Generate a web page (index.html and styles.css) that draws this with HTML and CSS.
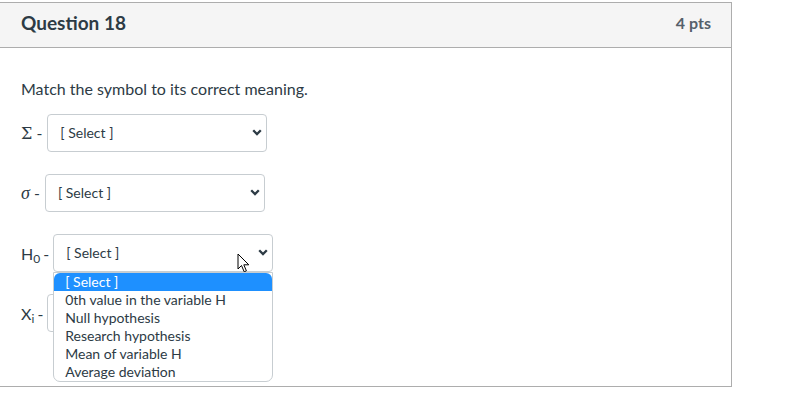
FILE: index.html
```html
<!DOCTYPE html>
<html>
<head>
<meta charset="utf-8">
<link rel="stylesheet" href="styles.css">
</head>
<body>
<div class="question">
  <div class="q-header">
    <span class="q-title">Question 18</span>
    <span class="q-pts">4 pts</span>
  </div>
  <div class="q-body">
    <p class="q-text">Match the symbol to its correct meaning.</p>
    <div class="rows">
      <div class="row">
        <span class="label"><span class="sym-sigma">Σ</span> -</span>
        <div class="select"><span class="sel-text">[ Select ]</span><svg class="chev" width="10" height="7" viewBox="0 0 10 7"><path d="M1.2 1.2 L5 5 L8.8 1.2" fill="none" stroke="#2d3b45" stroke-width="2.3"/></svg></div>
      </div>
      <div class="row">
        <span class="label"><span class="sym-sd">σ</span> -</span>
        <div class="select"><span class="sel-text">[ Select ]</span><svg class="chev" width="10" height="7" viewBox="0 0 10 7"><path d="M1.2 1.2 L5 5 L8.8 1.2" fill="none" stroke="#2d3b45" stroke-width="2.3"/></svg></div>
      </div>
      <div class="row">
        <span class="label label-tight">H<sub>0</sub> -</span>
        <div class="select open"><span class="sel-text">[ Select ]</span><svg class="chev" width="10" height="7" viewBox="0 0 10 7"><path d="M1.2 1.2 L5 5 L8.8 1.2" fill="none" stroke="#2d3b45" stroke-width="2.3"/></svg>
          <svg class="cursor" width="14" height="21" viewBox="0 0 14 21"><path d="M1 1 L1 16 L4.5 12.5 L7.2 18.8 L9.4 17.8 L6.8 11.8 L11.8 11.8 Z" fill="#fff" stroke="#000" stroke-width="1" stroke-linejoin="miter"/></svg>
          <ul class="menu">
            <li class="active">[ Select ]</li>
            <li>0th value in the variable H</li>
            <li>Null hypothesis</li>
            <li>Research hypothesis</li>
            <li>Mean of variable H</li>
            <li>Average deviation</li>
          </ul>
        </div>
      </div>
      <div class="row">
        <span class="label label-tight">X<sub>i</sub> -</span>
        <div class="select covered"><span class="sel-text">[ Select ]</span><svg class="chev" width="10" height="7" viewBox="0 0 10 7"><path d="M1.2 1.2 L5 5 L8.8 1.2" fill="none" stroke="#2d3b45" stroke-width="2.3"/></svg></div>
      </div>
    </div>
  </div>
</div>
</body>
</html>
```
FILE: styles.css
```css
html, body {
  margin: 0;
  padding: 0;
  background: #fff;
}
body {
  font-family: Lato, "Noto Sans", sans-serif;
  color: #2d3b45;
}
.question {
  margin: 2px 0 0 -1px;
  width: 731px;
  border: 1px solid #adadad;
}
.q-header {
  box-sizing: border-box;
  height: 45px;
  background: #f5f5f5;
  border-bottom: 1px solid #adadad;
  display: flex;
  align-items: center;
  justify-content: space-between;
  padding: 0 20px 5px 21px;
}
.q-title {
  font-size: 19px;
  font-weight: 700;
}
.q-pts {
  font-size: 16px;
  font-weight: 700;
  color: #55606a;
}
.q-body {
  padding: 30px 20px 54px 21px;
}
.q-text {
  margin: 0 0 15px 0;
  font-size: 16px;
  line-height: 21px;
}
.rows {
  display: flex;
  flex-direction: column;
  gap: 22px;
}
.row {
  display: flex;
  align-items: center;
  height: 38px;
  font-size: 16px;
}
.label {
  margin-right: 5px;
  white-space: nowrap;
}
.label-tight {
  margin-right: 4px;
}
.label sub {
  font-size: 12px;
  vertical-align: -3px;
  line-height: 0;
  margin-right: -1px;
}
.sym-sigma {
  font-family: "DejaVu Serif", "Liberation Serif", serif;
  font-size: 16px;
}
.sym-sd {
  font-family: "Liberation Serif", serif;
  font-style: italic;
  font-size: 18px;
}
.select {
  position: relative;
  box-sizing: border-box;
  width: 220px;
  height: 38px;
  border: 1px solid #c7cdd1;
  border-radius: 4px;
  background: #fff;
  display: flex;
  align-items: center;
  justify-content: space-between;
  padding: 0 4px 0 12px;
}
.covered .sel-text,
.covered .chev {
  visibility: hidden;
}
.sel-text {
  font-size: 14px;
  margin-top: -2px;
}
.chev {
  display: block;
  margin-top: -2px;
}
.cursor {
  position: absolute;
  left: 183px;
  top: 18px;
}
.menu {
  position: absolute;
  left: -1px;
  top: 37px;
  width: 220px;
  box-sizing: border-box;
  margin: 0;
  padding: 0;
  list-style: none;
  border: 1px solid #c7cdd1;
  border-radius: 0 0 7px 7px;
  background: #fff;
  overflow: hidden;
  z-index: 2;
}
.menu li {
  height: 18px;
  line-height: 18px;
  font-size: 14px;
  padding-left: 11px;
  color: #2d3b45;
}
.menu li.active {
  background: #1e90ff;
  color: #fff;
  border-radius: 6px 6px 0 0;
}
```
